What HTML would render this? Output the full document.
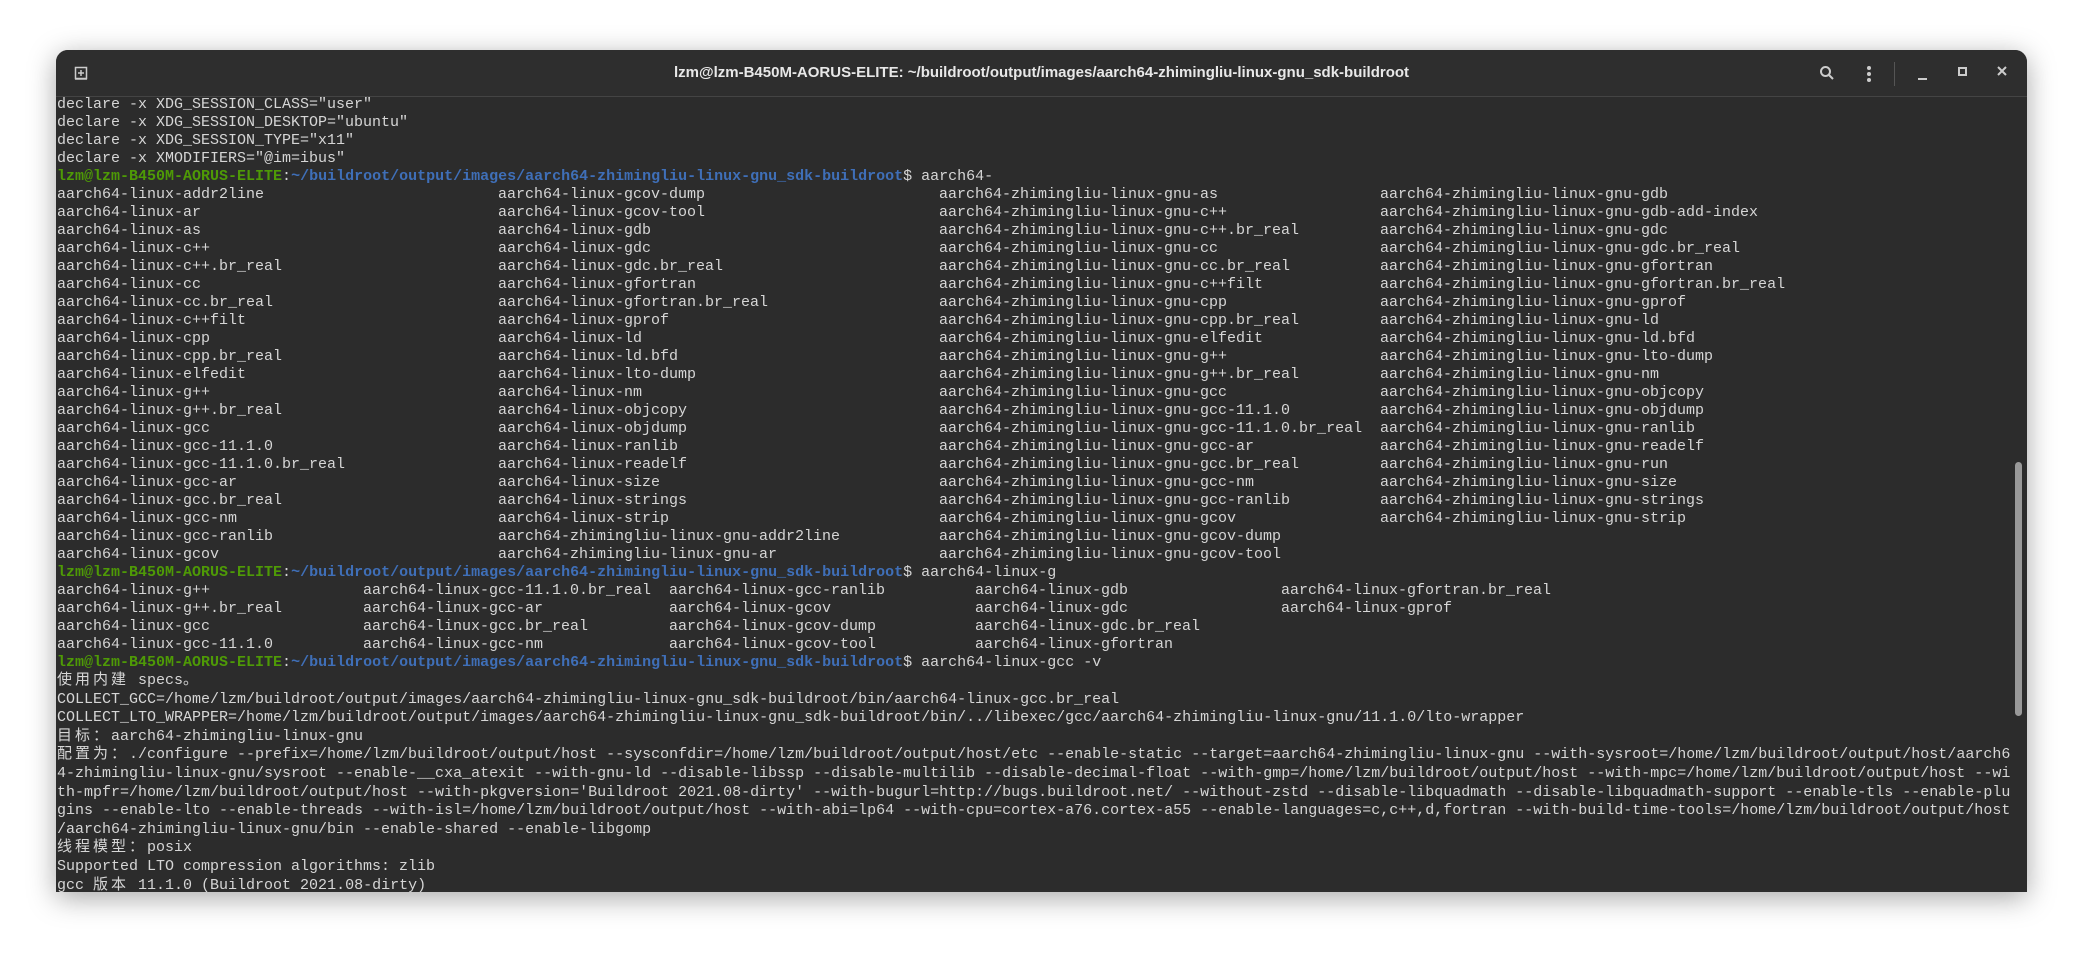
<!DOCTYPE html>
<html><head><meta charset="utf-8"><style>
html,body{margin:0;padding:0;background:#fff;width:2083px;height:954px;overflow:hidden}
.win{position:absolute;left:56px;top:50px;width:1971px;height:842px;background:#2c2c2c;border-radius:12px 12px 0 0;box-shadow:0 6px 28px rgba(0,0,0,.35);overflow:hidden}
.tb{position:absolute;left:0;top:0;right:0;height:46px;background:#2e2e2e;border-bottom:1px solid #444}
.title{position:absolute;left:0;right:0;top:0;height:46px;text-align:center;color:#e8e8e8;font:bold 15px "Liberation Sans",sans-serif;line-height:46px}
.term{position:absolute;left:1px;top:46px;color:#d6d6d6;font:15px/18px "Liberation Mono","Noto Sans CJK SC",monospace;white-space:normal}
.term div{height:18px;white-space:pre}
.term div.k{height:18.6px;line-height:18.6px}
.g{color:#4e9a06;font-weight:bold}.b{color:#3f6fb8;font-weight:bold}
.c{letter-spacing:3px}
.l4{display:grid;grid-auto-flow:column;grid-template-rows:repeat(21,18px);grid-template-columns:repeat(4,441px)}
.l5{display:grid;grid-auto-flow:column;grid-template-rows:repeat(4,18px);grid-template-columns:repeat(5,306px)}
.l4 span,.l5 span{height:18px;white-space:pre}
.sb{position:absolute;left:1959px;top:412px;width:7px;height:254px;background:#999;border-radius:4px}
</style></head><body>
<div class="win">
<div class="tb">
<svg style="position:absolute;left:18px;top:16px" width="14" height="14" viewBox="0 0 14 14"><rect x="1.5" y="1.5" width="11" height="11" fill="none" stroke="#ccc" stroke-width="1.5"/><path d="M7 4v6M4 7h6" stroke="#ccc" stroke-width="1.5"/><path d="M1 13h12" stroke="#ccc" stroke-width="1.5"/></svg>
<div class="title">lzm@lzm-B450M-AORUS-ELITE: ~/buildroot/output/images/aarch64-zhimingliu-linux-gnu_sdk-buildroot</div>
<svg style="position:absolute;left:1763px;top:15px" width="16" height="16" viewBox="0 0 16 16"><circle cx="6.5" cy="6.5" r="4.5" fill="none" stroke="#ccc" stroke-width="2"/><path d="M10 10l4 4" stroke="#ccc" stroke-width="2"/></svg>
<div style="position:absolute;left:1810px;top:15px;width:6px;height:18px"><svg width="6" height="18" viewBox="0 0 6 18"><circle cx="3" cy="3" r="2" fill="#ccc"/><circle cx="3" cy="9" r="2" fill="#ccc"/><circle cx="3" cy="15" r="2" fill="#ccc"/></svg></div>
<div style="position:absolute;left:1838px;top:12px;width:1px;height:24px;background:#555"></div>
<div style="position:absolute;left:1862px;top:28px;width:9px;height:2px;background:#ccc"></div>
<div style="position:absolute;left:1902px;top:17px;width:5px;height:5px;border:2px solid #ccc"></div>
<svg style="position:absolute;left:1941px;top:16px" width="10" height="10" viewBox="0 0 10 10"><path d="M1 1l8 8M9 1l-8 8" stroke="#ccc" stroke-width="2"/></svg>
</div>
<div class="term">
<div>declare -x XDG_SESSION_CLASS="user"</div>
<div>declare -x XDG_SESSION_DESKTOP="ubuntu"</div>
<div>declare -x XDG_SESSION_TYPE="x11"</div>
<div>declare -x XMODIFIERS="@im=ibus"</div>
<div><span class="g">lzm@lzm-B450M-AORUS-ELITE</span>:<span class="b">~/buildroot/output/images/aarch64-zhimingliu-linux-gnu_sdk-buildroot</span>$ aarch64-</div>
<section class="l4">
<span>aarch64-linux-addr2line</span><span>aarch64-linux-ar</span><span>aarch64-linux-as</span><span>aarch64-linux-c++</span><span>aarch64-linux-c++.br_real</span><span>aarch64-linux-cc</span><span>aarch64-linux-cc.br_real</span><span>aarch64-linux-c++filt</span><span>aarch64-linux-cpp</span><span>aarch64-linux-cpp.br_real</span><span>aarch64-linux-elfedit</span><span>aarch64-linux-g++</span><span>aarch64-linux-g++.br_real</span><span>aarch64-linux-gcc</span><span>aarch64-linux-gcc-11.1.0</span><span>aarch64-linux-gcc-11.1.0.br_real</span><span>aarch64-linux-gcc-ar</span><span>aarch64-linux-gcc.br_real</span><span>aarch64-linux-gcc-nm</span><span>aarch64-linux-gcc-ranlib</span><span>aarch64-linux-gcov</span>
<span>aarch64-linux-gcov-dump</span><span>aarch64-linux-gcov-tool</span><span>aarch64-linux-gdb</span><span>aarch64-linux-gdc</span><span>aarch64-linux-gdc.br_real</span><span>aarch64-linux-gfortran</span><span>aarch64-linux-gfortran.br_real</span><span>aarch64-linux-gprof</span><span>aarch64-linux-ld</span><span>aarch64-linux-ld.bfd</span><span>aarch64-linux-lto-dump</span><span>aarch64-linux-nm</span><span>aarch64-linux-objcopy</span><span>aarch64-linux-objdump</span><span>aarch64-linux-ranlib</span><span>aarch64-linux-readelf</span><span>aarch64-linux-size</span><span>aarch64-linux-strings</span><span>aarch64-linux-strip</span><span>aarch64-zhimingliu-linux-gnu-addr2line</span><span>aarch64-zhimingliu-linux-gnu-ar</span>
<span>aarch64-zhimingliu-linux-gnu-as</span><span>aarch64-zhimingliu-linux-gnu-c++</span><span>aarch64-zhimingliu-linux-gnu-c++.br_real</span><span>aarch64-zhimingliu-linux-gnu-cc</span><span>aarch64-zhimingliu-linux-gnu-cc.br_real</span><span>aarch64-zhimingliu-linux-gnu-c++filt</span><span>aarch64-zhimingliu-linux-gnu-cpp</span><span>aarch64-zhimingliu-linux-gnu-cpp.br_real</span><span>aarch64-zhimingliu-linux-gnu-elfedit</span><span>aarch64-zhimingliu-linux-gnu-g++</span><span>aarch64-zhimingliu-linux-gnu-g++.br_real</span><span>aarch64-zhimingliu-linux-gnu-gcc</span><span>aarch64-zhimingliu-linux-gnu-gcc-11.1.0</span><span>aarch64-zhimingliu-linux-gnu-gcc-11.1.0.br_real</span><span>aarch64-zhimingliu-linux-gnu-gcc-ar</span><span>aarch64-zhimingliu-linux-gnu-gcc.br_real</span><span>aarch64-zhimingliu-linux-gnu-gcc-nm</span><span>aarch64-zhimingliu-linux-gnu-gcc-ranlib</span><span>aarch64-zhimingliu-linux-gnu-gcov</span><span>aarch64-zhimingliu-linux-gnu-gcov-dump</span><span>aarch64-zhimingliu-linux-gnu-gcov-tool</span>
<span>aarch64-zhimingliu-linux-gnu-gdb</span><span>aarch64-zhimingliu-linux-gnu-gdb-add-index</span><span>aarch64-zhimingliu-linux-gnu-gdc</span><span>aarch64-zhimingliu-linux-gnu-gdc.br_real</span><span>aarch64-zhimingliu-linux-gnu-gfortran</span><span>aarch64-zhimingliu-linux-gnu-gfortran.br_real</span><span>aarch64-zhimingliu-linux-gnu-gprof</span><span>aarch64-zhimingliu-linux-gnu-ld</span><span>aarch64-zhimingliu-linux-gnu-ld.bfd</span><span>aarch64-zhimingliu-linux-gnu-lto-dump</span><span>aarch64-zhimingliu-linux-gnu-nm</span><span>aarch64-zhimingliu-linux-gnu-objcopy</span><span>aarch64-zhimingliu-linux-gnu-objdump</span><span>aarch64-zhimingliu-linux-gnu-ranlib</span><span>aarch64-zhimingliu-linux-gnu-readelf</span><span>aarch64-zhimingliu-linux-gnu-run</span><span>aarch64-zhimingliu-linux-gnu-size</span><span>aarch64-zhimingliu-linux-gnu-strings</span><span>aarch64-zhimingliu-linux-gnu-strip</span>
</section>
<div><span class="g">lzm@lzm-B450M-AORUS-ELITE</span>:<span class="b">~/buildroot/output/images/aarch64-zhimingliu-linux-gnu_sdk-buildroot</span>$ aarch64-linux-g</div>
<section class="l5">
<span>aarch64-linux-g++</span><span>aarch64-linux-g++.br_real</span><span>aarch64-linux-gcc</span><span>aarch64-linux-gcc-11.1.0</span>
<span>aarch64-linux-gcc-11.1.0.br_real</span><span>aarch64-linux-gcc-ar</span><span>aarch64-linux-gcc.br_real</span><span>aarch64-linux-gcc-nm</span>
<span>aarch64-linux-gcc-ranlib</span><span>aarch64-linux-gcov</span><span>aarch64-linux-gcov-dump</span><span>aarch64-linux-gcov-tool</span>
<span>aarch64-linux-gdb</span><span>aarch64-linux-gdc</span><span>aarch64-linux-gdc.br_real</span><span>aarch64-linux-gfortran</span>
<span>aarch64-linux-gfortran.br_real</span><span>aarch64-linux-gprof</span>
</section>
<div><span class="g">lzm@lzm-B450M-AORUS-ELITE</span>:<span class="b">~/buildroot/output/images/aarch64-zhimingliu-linux-gnu_sdk-buildroot</span>$ aarch64-linux-gcc -v</div>
<div class="k"><span class="c">使用内建</span> specs。</div>
<div class="k">COLLECT_GCC=/home/lzm/buildroot/output/images/aarch64-zhimingliu-linux-gnu_sdk-buildroot/bin/aarch64-linux-gcc.br_real</div>
<div class="k">COLLECT_LTO_WRAPPER=/home/lzm/buildroot/output/images/aarch64-zhimingliu-linux-gnu_sdk-buildroot/bin/../libexec/gcc/aarch64-zhimingliu-linux-gnu/11.1.0/lto-wrapper</div>
<div class="k"><span class="c">目标：</span>aarch64-zhimingliu-linux-gnu</div>
<div class="k"><span class="c">配置为：</span>./configure --prefix=/home/lzm/buildroot/output/host --sysconfdir=/home/lzm/buildroot/output/host/etc --enable-static --target=aarch64-zhimingliu-linux-gnu --with-sysroot=/home/lzm/buildroot/output/host/aarch6</div>
<div class="k">4-zhimingliu-linux-gnu/sysroot --enable-__cxa_atexit --with-gnu-ld --disable-libssp --disable-multilib --disable-decimal-float --with-gmp=/home/lzm/buildroot/output/host --with-mpc=/home/lzm/buildroot/output/host --wi</div>
<div class="k">th-mpfr=/home/lzm/buildroot/output/host --with-pkgversion='Buildroot 2021.08-dirty' --with-bugurl=http://bugs.buildroot.net/ --without-zstd --disable-libquadmath --disable-libquadmath-support --enable-tls --enable-plu</div>
<div class="k">gins --enable-lto --enable-threads --with-isl=/home/lzm/buildroot/output/host --with-abi=lp64 --with-cpu=cortex-a76.cortex-a55 --enable-languages=c,c++,d,fortran --with-build-time-tools=/home/lzm/buildroot/output/host</div>
<div class="k">/aarch64-zhimingliu-linux-gnu/bin --enable-shared --enable-libgomp</div>
<div class="k"><span class="c">线程模型：</span>posix</div>
<div class="k">Supported LTO compression algorithms: zlib</div>
<div class="k">gcc <span class="c">版本</span> 11.1.0 (Buildroot 2021.08-dirty)</div>
</div>
<div class="sb"></div>
</div>
</body></html>
